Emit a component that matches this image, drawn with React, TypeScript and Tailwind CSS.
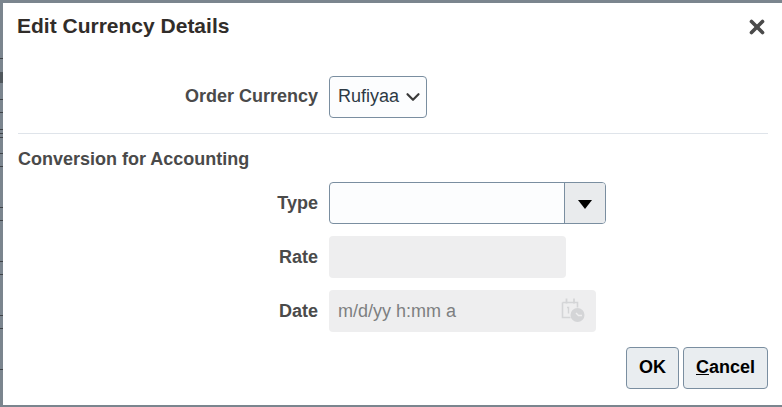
import React from 'react';
import { ChevronDown, X } from 'lucide-react';

// bits of the page behind the dialog that show at its left edge
const marks = [
  'mt-[55px] h-px',
  'mt-[13px] h-[11px] opacity-70',
  'mt-[16px] h-px',
  'mt-[12px] h-px',
  'mt-[16px] h-px',
  'mt-[3px] h-px',
  'mt-[3px] h-px',
  'mt-[15px] h-px',
  'mt-[12px] h-px',
  'mt-[40px] h-px',
  'mt-[12px] h-px',
  'mt-[40px] h-px',
  'mt-[12px] h-px',
  'mt-[40px] h-px',
  'mt-[12px] h-px',
  'mt-[40px] h-px',
];

function CalendarClock() {
  return (
    <svg width="24" height="26" viewBox="0 0 24 26" fill="none" className="-mt-[3px]">
      <path d="M1.5 5.5h15v5M1.5 5.5v15h8" stroke="#d4d5d7" strokeWidth="1.6" />
      <path d="M5.5 1.5v5M13 1.5v5" stroke="#d4d5d7" strokeWidth="1.8" />
      <path d="M6 10.5h1.5v6" stroke="#d4d5d7" strokeWidth="1.4" />
      <circle cx="16.5" cy="18" r="7" fill="#d4d5d7" />
      <path d="M15 16l2.5 2.5h3.5" stroke="#eeeeef" strokeWidth="1.4" />
    </svg>
  );
}

function Row({ label, children, className, labelClass }: { label: string; children: React.ReactNode; className?: string; labelClass?: string }) {
  return (
    <div className={`flex items-center ${className ?? ''}`}>
      <label className={`w-[311px] pr-[11px] text-right text-[18px] font-bold text-[#4a4a4a] ${labelClass ?? ''}`}>{label}</label>
      {children}
    </div>
  );
}

export default function App() {
  return (
    <div className="flex h-[407px] w-[782px] flex-col overflow-hidden bg-[#7b858e] font-['Liberation_Sans',Arial,sans-serif]">
      <div className="h-[3px] shrink-0" />
      <div className="flex h-[402px] shrink-0">
        <div className="flex w-[3px] shrink-0 flex-col">
          {marks.map((m, i) => (
            <div key={i} className={`bg-[#3f4347] ${m}`} />
          ))}
        </div>
        <div className="flex-1 bg-white pl-[15px] pr-[14px]">
          <div className="flex h-[47px] items-center justify-between">
            <h1 className="-ml-[1px] mb-[2px] text-[21px] font-bold leading-none text-[#312d2a]">Edit Currency Details</h1>
            <X size={22} strokeWidth={4} className="text-[#4a4a4a]" />
          </div>

          <Row label="Order Currency" className="mt-[26px]" labelClass="mb-[2px]">
            <div className="flex h-[42px] w-[98px] items-center justify-between rounded-[4px] border border-[#7a8ea0] bg-[#fcfdfe] pb-[2px] pl-[8px] pr-[2px] text-[18px] text-[#2d3a45]">
              Rufiyaa
              <ChevronDown size={22} strokeWidth={2.4} className="mt-[2px] text-[#3a3a3a]" />
            </div>
          </Row>

          <div className="mt-[15px] border-t border-[#dfe4ea]" />
          <h2 className="mt-[15px] text-[18px] font-bold leading-[20px] text-[#4a4a4a]">Conversion for Accounting</h2>

          <Row label="Type" className="mt-[13px]">
            <div className="flex h-[42px] w-[277px] rounded-[4px] border border-[#7a8ea0] bg-[#fcfdfe]">
              <div className="flex-1" />
              <div className="flex w-[41px] items-center justify-center rounded-r-[3px] border-l border-[#7a8ea0] bg-[#e9ebed]">
                <div className="mt-[2px] h-0 w-0 border-x-[7px] border-t-[9px] border-x-transparent border-t-black" />
              </div>
            </div>
          </Row>

          <Row label="Rate" className="mt-[12px]">
            <div className="h-[42px] w-[237px] rounded-[4px] bg-[#eeeeef]" />
          </Row>

          <Row label="Date" className="mt-[12px]">
            <div className="flex h-[42px] w-[267px] items-center justify-between rounded-[4px] bg-[#eeeeef] pl-[9px] pr-[11px] text-[18px] text-[#7d7f81]">
              m/d/yy h:mm a
              <CalendarClock />
            </div>
          </Row>

          <div className="mt-[15px] flex justify-end gap-[4px]">
            <button className="h-[42px] w-[53px] rounded-[4px] border border-[#7a8ea0] bg-[#e9edf0] pb-[2px] text-[18px] font-bold text-black">OK</button>
            <button className="h-[42px] w-[85px] rounded-[4px] border border-[#7a8ea0] bg-[#e9edf0] pb-[2px] text-[18px] font-bold text-black">
              <span className="underline">C</span>ancel
            </button>
          </div>
        </div>
      </div>
      <div className="flex-1" />
    </div>
  );
}
